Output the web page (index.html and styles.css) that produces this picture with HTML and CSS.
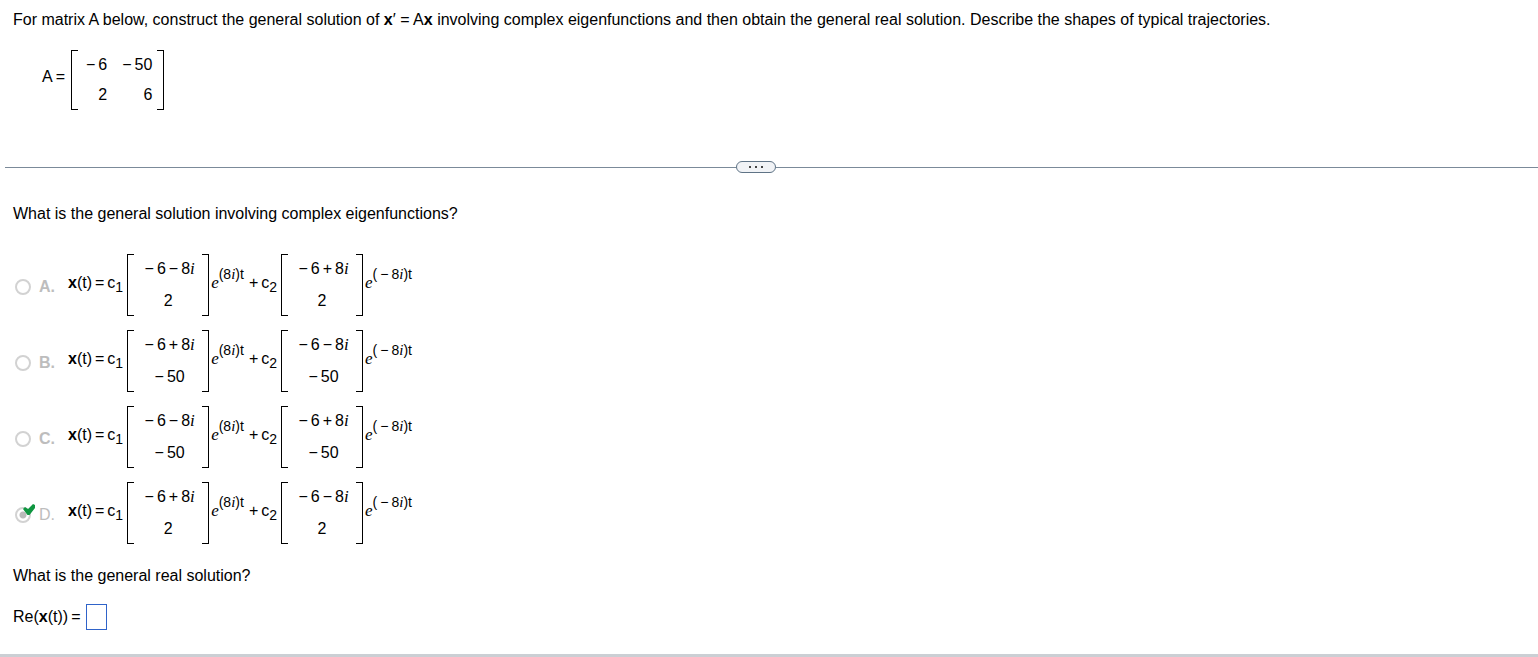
FILE: index.html
```
<!DOCTYPE html>
<html lang="en">
<head>
    <meta charset="UTF-8">
    <meta name="viewport" content="width=device-width, initial-scale=1.0">
    <title>Complex Eigenfunctions</title>
    <link rel="stylesheet" href="styles.css">
</head>
<body>
    <main class="exercise">
        <p class="prompt">For matrix A below, construct the general solution of <b>x</b>′ = A<b>x</b> involving complex eigenfunctions and then obtain the general real solution. Describe the shapes of typical trajectories.</p>

        <div class="given">
            <span class="math">A<span class="op">=</span></span>
            <div class="matrix square">
                <span><span class="op">−</span>6</span>
                <span><span class="op">−</span>50</span>
                <span>2</span>
                <span>6</span>
            </div>
        </div>

        <div class="divider">
            <button type="button" class="more" aria-label="Show more"><i></i><i></i><i></i></button>
        </div>

        <p class="question" id="q1">What is the general solution involving complex eigenfunctions?</p>

        <div class="choices" role="radiogroup" aria-labelledby="q1">
            <div class="choice">
                <span class="mark"><input type="radio" name="solution" id="choiceA" disabled></span>
                <label for="choiceA">
                    <span class="letter">A.</span>
                    <span class="formula">
                        <span class="math"><b>x</b>(t)<span class="op">=</span>c<sub>1</sub></span>
                        <span class="matrix vector"><span><span class="op">−</span>6<span class="op">−</span>8<em>i</em></span><span>2</span></span>
                        <span class="math"><em>e</em><sup>(8<em>i</em>)t</sup><span class="op plus">+</span>c<sub>2</sub></span>
                        <span class="matrix vector"><span><span class="op">−</span>6<span class="op">+</span>8<em>i</em></span><span>2</span></span>
                        <span class="math"><em>e</em><sup>(<span class="op">−</span>8<em>i</em>)t</sup></span>
                    </span>
                </label>
            </div>
            <div class="choice">
                <span class="mark"><input type="radio" name="solution" id="choiceB" disabled></span>
                <label for="choiceB">
                    <span class="letter">B.</span>
                    <span class="formula">
                        <span class="math"><b>x</b>(t)<span class="op">=</span>c<sub>1</sub></span>
                        <span class="matrix vector"><span><span class="op">−</span>6<span class="op">+</span>8<em>i</em></span><span><span class="op">−</span>50</span></span>
                        <span class="math"><em>e</em><sup>(8<em>i</em>)t</sup><span class="op plus">+</span>c<sub>2</sub></span>
                        <span class="matrix vector"><span><span class="op">−</span>6<span class="op">−</span>8<em>i</em></span><span><span class="op">−</span>50</span></span>
                        <span class="math"><em>e</em><sup>(<span class="op">−</span>8<em>i</em>)t</sup></span>
                    </span>
                </label>
            </div>
            <div class="choice">
                <span class="mark"><input type="radio" name="solution" id="choiceC" disabled></span>
                <label for="choiceC">
                    <span class="letter">C.</span>
                    <span class="formula">
                        <span class="math"><b>x</b>(t)<span class="op">=</span>c<sub>1</sub></span>
                        <span class="matrix vector"><span><span class="op">−</span>6<span class="op">−</span>8<em>i</em></span><span><span class="op">−</span>50</span></span>
                        <span class="math"><em>e</em><sup>(8<em>i</em>)t</sup><span class="op plus">+</span>c<sub>2</sub></span>
                        <span class="matrix vector"><span><span class="op">−</span>6<span class="op">+</span>8<em>i</em></span><span><span class="op">−</span>50</span></span>
                        <span class="math"><em>e</em><sup>(<span class="op">−</span>8<em>i</em>)t</sup></span>
                    </span>
                </label>
            </div>
            <div class="choice">
                <span class="mark">
                    <input type="radio" name="solution" id="choiceD" checked disabled>
                    <svg class="tick" viewBox="0 0 14 12" aria-hidden="true"><path d="M1 5 L3 3 L6 5 L11 0 L13 1 L13 4 L7.5 11 L5.5 11 Z" fill="#0f9640"/></svg>
                </span>
                <label for="choiceD">
                    <span class="letter">D.</span>
                    <span class="formula">
                        <span class="math"><b>x</b>(t)<span class="op">=</span>c<sub>1</sub></span>
                        <span class="matrix vector"><span><span class="op">−</span>6<span class="op">+</span>8<em>i</em></span><span>2</span></span>
                        <span class="math"><em>e</em><sup>(8<em>i</em>)t</sup><span class="op plus">+</span>c<sub>2</sub></span>
                        <span class="matrix vector"><span><span class="op">−</span>6<span class="op">−</span>8<em>i</em></span><span>2</span></span>
                        <span class="math"><em>e</em><sup>(<span class="op">−</span>8<em>i</em>)t</sup></span>
                    </span>
                </label>
            </div>
        </div>

        <p class="question">What is the general real solution?</p>

        <div class="answer">
            <label for="realSolution">Re(<b>x</b>(t))<span class="op">=</span></label>
            <input type="text" id="realSolution">
        </div>
    </main>
</body>
</html>
```
FILE: styles.css
```
* {
    box-sizing: border-box;
}
body {
    margin: 0;
    background: #fff;
    color: #000;
    font: 16px/20px "Liberation Sans", Arial, sans-serif;
}
.exercise {
    padding: 10px 0 24px;
    border-bottom: 3px solid #cbcfd4;
}
p {
    margin: 0 13px;
}
.given {
    display: flex;
    align-items: center;
    gap: 3px;
    margin: 20px 42px 51px;
}
.given .math {
    padding-bottom: 6px;
}
.op {
    margin: 0 3px;
}
.plus {
    margin: 0 3px 0 5px;
}
em {
    font-family: "Liberation Serif", "Times New Roman", serif;
    font-size: 17px;
    line-height: 0;
}

/* square brackets on both sides of the cells */
.matrix {
    position: relative;
    display: grid;
    align-content: center;
}
.matrix::before,
.matrix::after {
    content: "";
    position: absolute;
    top: 0;
    bottom: 0;
    width: 6px;
    border: 1px solid #000;
}
.matrix::before {
    left: 0;
    border-right: 0;
}
.matrix::after {
    right: 0;
    border-left: 0;
}
.square {
    grid-template-columns: auto auto;
    gap: 10px 12px;
    padding: 5px 12px;
    text-align: right;
}
.vector {
    width: 82px;
    height: 62px;
    row-gap: 12px;
    text-align: center;
}

.divider {
    display: flex;
    align-items: center;
    margin-left: 5px;
}
.divider::before,
.divider::after {
    content: "";
    flex: 24;
    height: 1px;
    background: #7b8a99;
}
.divider::after {
    flex: 25;
}
.more {
    display: flex;
    align-items: center;
    justify-content: center;
    gap: 4px;
    width: 40px;
    height: 12px;
    padding: 0;
    border: 1px solid #5f7386;
    border-radius: 6px;
    background: #f1f3f6;
}
.more i {
    width: 2px;
    height: 2px;
    background: #444;
}

.divider + .question {
    margin-top: 31px;
    margin-bottom: 30px;
}
.choices {
    display: grid;
    gap: 14px;
    margin-left: 15px;
}
.choice {
    display: flex;
    align-items: center;
}
.choice label {
    display: flex;
    align-items: center;
}
.mark {
    position: relative;
    display: flex;
    margin-top: 4px;
}
.mark input {
    appearance: none;
    width: 16px;
    height: 16px;
    margin: 0;
    border: 2px solid #d2d2d2;
    border-radius: 50%;
}
.mark input:checked {
    background: radial-gradient(circle, #bbb 3px, #fff 4px);
}
.tick {
    position: absolute;
    top: -3px;
    left: 7px;
    width: 14px;
    height: 12px;
}
.letter {
    width: 29px;
    margin: 4px 0 0 8px;
    color: #bdbdbd;
    font-weight: bold;
}
.mark:has(:checked) + label .letter {
    font-weight: normal;
}
.formula {
    display: flex;
    align-items: center;
}
.formula > .math {
    padding: 0 4px 4px 0;
    white-space: nowrap;
}
.formula > .vector + .math {
    padding-left: 2px;
}
sub,
sup {
    font-size: 14px;
    line-height: 0;
}
sub {
    vertical-align: -4px;
}
sup {
    vertical-align: 9px;
}
sup em {
    font-size: 15px;
}

.choices + .question {
    margin-top: 22px;
}
.answer {
    display: flex;
    align-items: center;
    gap: 3px;
    margin: 18px 13px 0;
}
.answer input {
    width: 21px;
    height: 26px;
    padding: 0 2px;
    border: 1px solid #2f63c9;
    font: inherit;
}
```
